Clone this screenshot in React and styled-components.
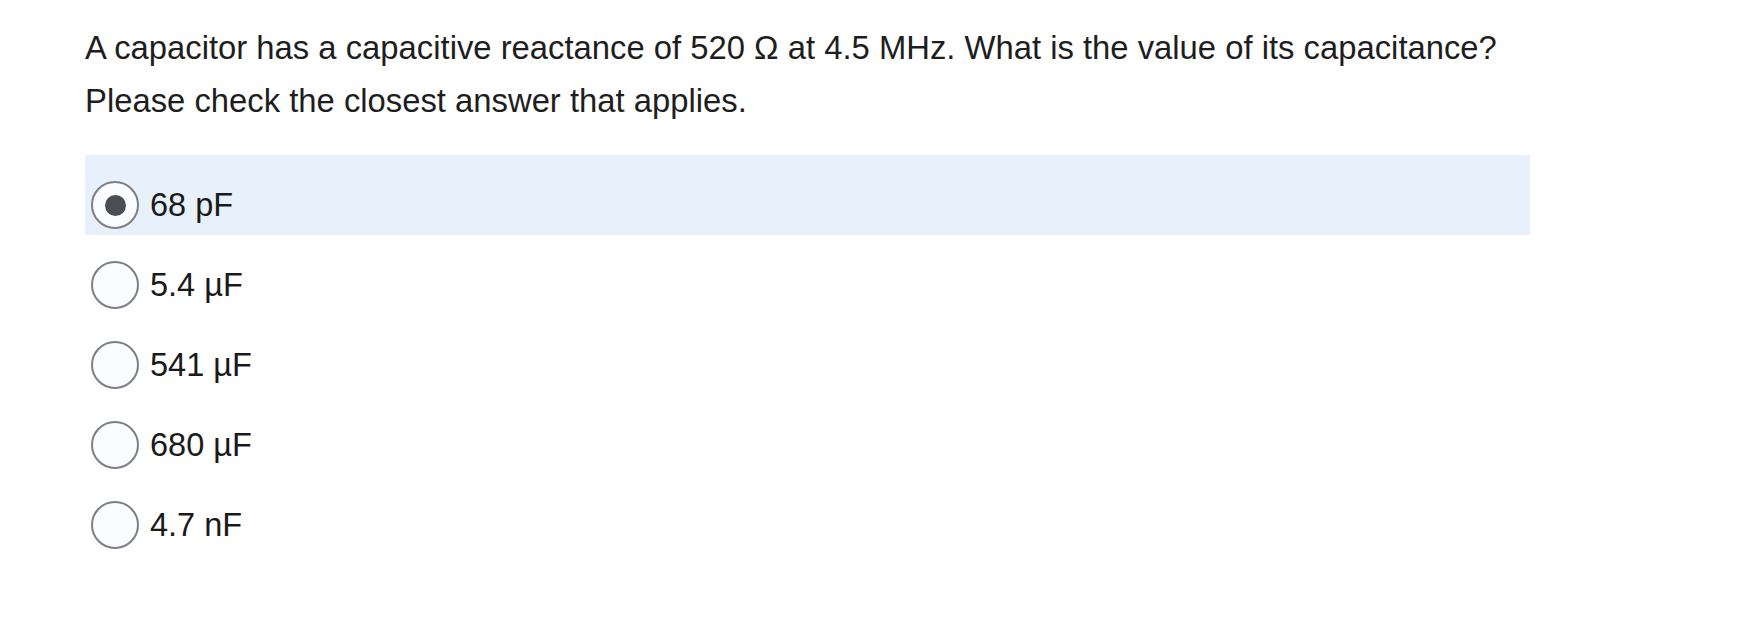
import React, { useState } from 'react';
import styled, { createGlobalStyle } from 'styled-components';

const GlobalStyle = createGlobalStyle`
    html, body {
        margin : 0;
        padding : 0;
        background : #ffffff;
    }
    body {
        font-family : "Liberation Sans", Arial, sans-serif;
        color : #222222;
    }
`

const Page = styled.main`
    padding : 21px 0 0 85px;
    width : 1445px;
`

const Prompt = styled.p`
    margin : 0;
    font-size : 32.8px;
    line-height : 53px;
    color : #1e1e1e;
    white-space : nowrap;
`

const Choices = styled.div`
    margin-top : 28px;
    display : flex;
    flex-direction : column;
`

const Choice = styled.label`
    display : flex;
    align-items : center;
    gap : 11px;
    height : 80px;
    box-sizing : border-box;
    padding : 26px 0 6px 6px;
    background : ${props => props.selected ? '#e8f1fb' : 'transparent'};
    cursor : pointer;
`

const Radio = styled.span`
    flex : none;
    width : 48px;
    height : 48px;
    box-sizing : border-box;
    border : 2px solid #7d7f82;
    border-radius : 50%;
    background : #fafcff;
    display : flex;
    align-items : center;
    justify-content : center;

    &::after {
        content : '';
        width : 21px;
        height : 21px;
        border-radius : 50%;
        background : #4a4e54;
        display : ${props => props.checked ? 'block' : 'none'};
    }
`

const Label = styled.span`
    font-size : 32.5px;
    line-height : 48px;
    color : #1a1a1a;
`

const answers = ['68 pF', '5.4 µF', '541 µF', '680 µF', '4.7 nF'];

export default function App(){
    const [ picked, setPicked ] = useState(0);

    return (
        <>
            <GlobalStyle/>
            <Page>
                <Prompt>A capacitor has a capacitive reactance of 520 Ω at 4.5 MHz. What is the value of its capacitance?</Prompt>
                <Prompt>Please check the closest answer that applies.</Prompt>
                <Choices>
                    {answers.map((a, i) => (
                        <Choice key={a} selected={picked === i} onClick={() => setPicked(i)}>
                            <Radio checked={picked === i}/>
                            <Label>{a}</Label>
                        </Choice>
                    ))}
                </Choices>
            </Page>
        </>
    );
};
